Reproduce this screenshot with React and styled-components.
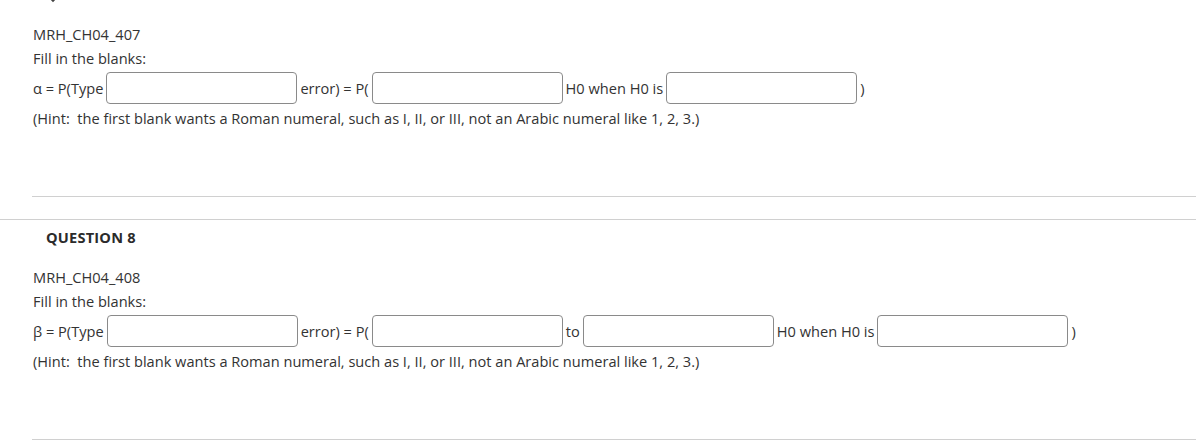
import styled, { createGlobalStyle } from "styled-components";

const GlobalStyle = createGlobalStyle`
  body {
    margin: 0;
    background: #fff;
    font-family: "Open Sans", "Noto Sans", sans-serif;
    font-size: 14.6px;
    color: #333;
  }
`;

const questions = [
  {
    code: "MRH_CH04_407",
    parts: ["α = P(Type", "error) = P(", "H0 when H0 is", ")"],
  },
  {
    code: "MRH_CH04_408",
    number: 8,
    parts: ["β = P(Type", "error) = P(", "to", "H0 when H0 is", ")"],
  },
];

function App() {
  return (
    <>
      <GlobalStyle />
      <Page>
        <TopMark width="10" height="6" viewBox="0 0 10 6">
          <path d="M1 0 L5 4 L9 0" fill="none" stroke="#444" strokeWidth="1.6" />
        </TopMark>
        {questions.map((q, i) => (
          <Question key={q.code} $first={i === 0}>
            {q.number && <QuestionTitle>QUESTION {q.number}</QuestionTitle>}
            <Body>
              <Line>{q.code}</Line>
              <Line>Fill in the blanks:</Line>
              <BlankRow>
                {q.parts.map((p, j) => (
                  <Segment key={j}>
                    <span>{p}</span>
                    {j < q.parts.length - 1 && <Blank type="text" />}
                  </Segment>
                ))}
              </BlankRow>
              <Hint>
                (Hint:&nbsp; the first blank wants a Roman numeral, such as I, II, or III, not an Arabic numeral like 1, 2, 3.)
              </Hint>
            </Body>
            <Divider />
          </Question>
        ))}
      </Page>
    </>
  );
}

export default App;

const Page = styled.div`
  position: relative;
  width: 1196px;
  height: 448px;
  overflow: hidden;
`;

const TopMark = styled.svg`
  position: absolute;
  top: -3px;
  left: 48px;
`;

const Question = styled.section`
  padding-top: ${(p) => (p.$first ? "22px" : "0")};
  border-top: ${(p) => (p.$first ? "none" : "1px solid #d0d0d0")};
  margin-top: ${(p) => (p.$first ? "0" : "22px")};
`;

const QuestionTitle = styled.h3`
  margin: 0 0 18px;
  padding: 7px 0 0 46px;
  font-size: 14.6px;
  font-weight: 700;
  line-height: 20px;
  letter-spacing: 0.2px;
  color: #2b2b2b;
`;

const Body = styled.div`
  padding-left: 33px;
`;

const Line = styled.div`
  line-height: 24px;
`;

const BlankRow = styled.div`
  display: flex;
  align-items: center;
  height: 36px;
  white-space: nowrap;
`;

const Segment = styled.span`
  display: inline-flex;
  align-items: center;
  gap: 3px;
  margin-right: 3px;
`;

const Blank = styled.input`
  box-sizing: border-box;
  width: 191px;
  height: 32px;
  border: 1px solid #8a8a8a;
  border-radius: 4px;
  background: #fff;
  padding: 0 6px;
  font: inherit;
`;

const Hint = styled.div`
  line-height: 24px;
`;

const Divider = styled.hr`
  margin: 66px 0 0 32px;
  border: none;
  border-top: 1px solid #d0d0d0;
`;
